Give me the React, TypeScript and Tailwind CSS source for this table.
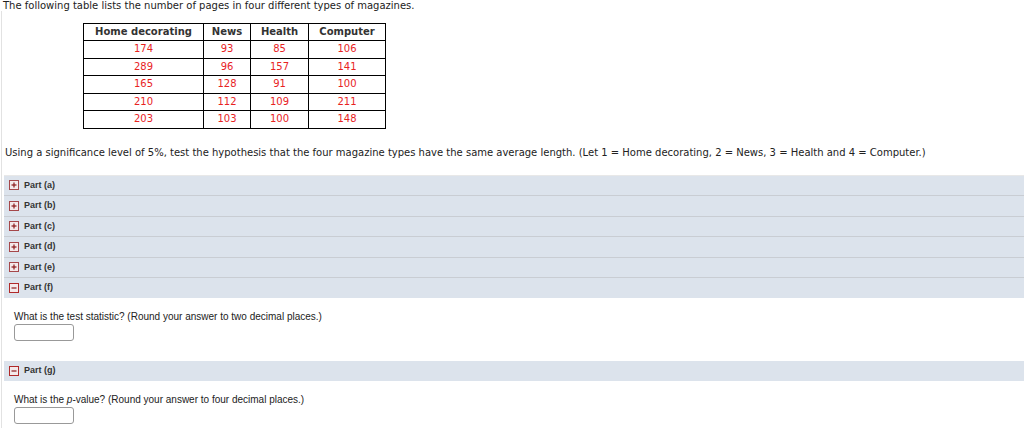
import React from 'react';

const verdana = { fontFamily: '"DejaVu Sans", Verdana, sans-serif' };
const arial = { fontFamily: '"Liberation Sans", Arial, sans-serif' };

const headers = [
  { label: 'Home decorating', w: 'w-[120px]' },
  { label: 'News', w: 'w-[47px]' },
  { label: 'Health', w: 'w-[58px]' },
  { label: 'Computer', w: 'w-[77px]' },
];
const rows = [
  ['174', '93', '85', '106'],
  ['289', '96', '157', '141'],
  ['165', '128', '91', '100'],
  ['210', '112', '109', '211'],
  ['203', '103', '100', '148'],
];

const ToggleIcon: React.FC<{ open?: boolean }> = ({ open }) => (
  <svg width="10" height="10" viewBox="0 0 10 10" className="shrink-0">
    <rect x="0.5" y="0.5" width="9" height="9" fill="#f4e9ea" stroke={open ? '#b02a2a' : '#a5474a'} />
    <line x1="2.5" y1="5" x2="7.5" y2="5" stroke="#8b1a1a" strokeWidth="1.2" />
    {!open && <line x1="5" y1="2.5" x2="5" y2="7.5" stroke="#8b1a1a" strokeWidth="1.2" />}
  </svg>
);

const PartRow: React.FC<{ label: string; open?: boolean; last?: boolean }> = ({ label, open, last }) => (
  <div
    className={`flex items-center gap-[5px] pl-[5px] bg-[#dce3ec] ${last ? 'h-[20px]' : 'h-[20.5px] border-b border-[#c9cdd3]'}`}
  >
    <ToggleIcon open={open} />
    <span className="text-[9px] font-bold text-[#333]" style={arial}>
      {label}
    </span>
  </div>
);

const Question: React.FC<{ children: React.ReactNode; bottom: string }> = ({ children, bottom }) => (
  <div className={`pl-[10px] pt-[13px] ${bottom} bg-white`} style={arial}>
    <p className="text-[10px] text-[#222] leading-[12px]">{children}</p>
    <div className="mt-[1px] w-[60px] h-[17px] border border-[#999] rounded-[3px] bg-white" />
  </div>
);

export default function App() {
  return (
    <div className="w-[1024px] h-[428px] bg-white overflow-hidden text-[#222]" style={verdana}>
      <p className="pl-[3px] text-[10px] leading-[10px] pt-[1px]">
        The following table lists the number of pages in four different types of magazines.
      </p>
      <div className="border-l border-[#e2e2e2] ml-[1px] pl-[2px]">
        <div className="pl-[79px] pt-[12px]">
          <table className="table-fixed w-[302px] border-collapse border border-black text-[10px]">
            <thead>
              <tr className="h-[17px]">
                {headers.map(h => (
                  <th key={h.label} className={`${h.w} border border-black font-bold text-[#333] leading-[10px] p-0`}>
                    {h.label}
                  </th>
                ))}
              </tr>
            </thead>
            <tbody>
              {rows.map((r, i) => (
                <tr key={i} className="h-[17.5px]">
                  {r.map((c, j) => (
                    <td key={j} className="border border-black text-center text-[#e8231f] leading-[10px] p-0">
                      {c}
                    </td>
                  ))}
                </tr>
              ))}
            </tbody>
          </table>
        </div>
        <p className="pl-[1px] pt-[19px] text-[10px] leading-[10px]">
          Using a significance level of 5%, test the hypothesis that the four magazine types have the same average length. (Let 1 = Home decorating, 2 = News, 3 = Health and 4 = Computer.)
        </p>
        <div className="mt-[17px] border-t border-[#e8e8e8]">
          <PartRow label="Part (a)" />
          <PartRow label="Part (b)" />
          <PartRow label="Part (c)" />
          <PartRow label="Part (d)" />
          <PartRow label="Part (e)" />
          <PartRow label="Part (f)" open last />
          <Question bottom="pb-[20px]">What is the test statistic? (Round your answer to two decimal places.)</Question>
          <PartRow label="Part (g)" open last />
          <Question bottom="pb-[8px]">
            What is the <i>p</i>-value? (Round your answer to four decimal places.)
          </Question>
        </div>
      </div>
    </div>
  );
}
